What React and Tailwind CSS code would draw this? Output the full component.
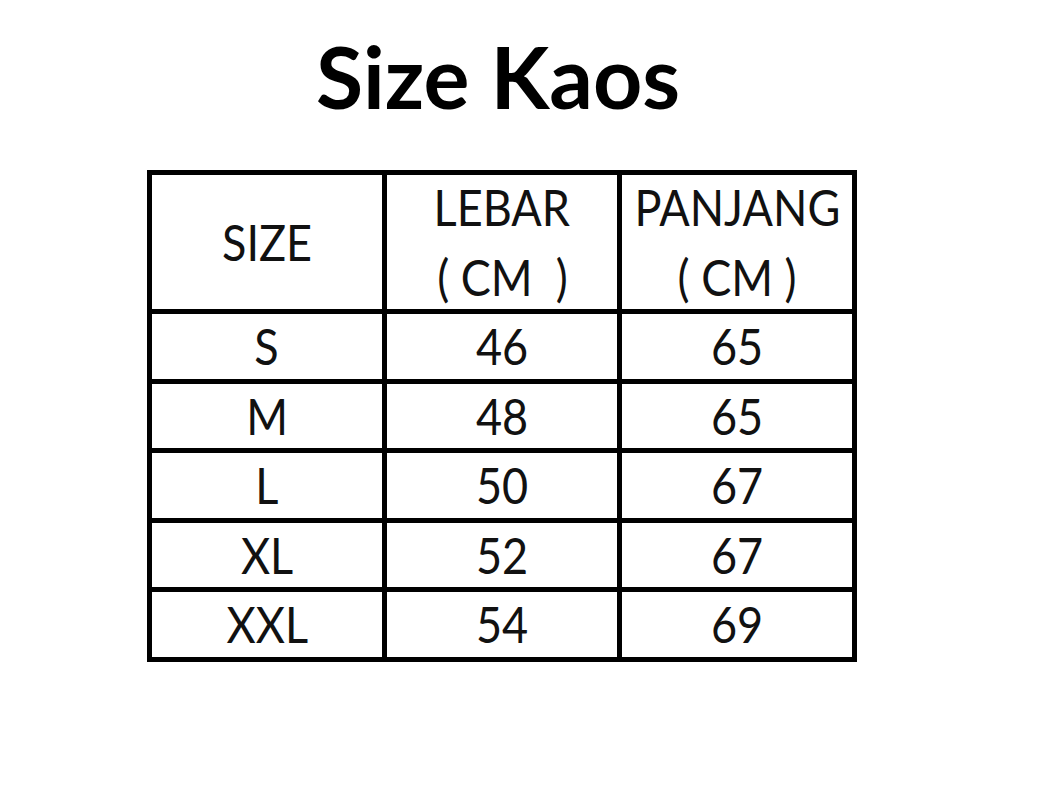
import React from "react";

const rows = [
  ["S", "46", "65"],
  ["M", "48", "65"],
  ["L", "50", "67"],
  ["XL", "52", "67"],
  ["XXL", "54", "69"],
];

function Cell({ children, h }) {
  return (
    <div className={`bg-white flex flex-col items-center justify-center ${h}`}>
      {children}
    </div>
  );
}

export default function App() {
  return (
    <div
      className="w-[1039px] h-[800px] bg-white text-[#111]"
      style={{ fontFamily: "Lato, 'Open Sans', sans-serif" }}
    >
      <div className="pt-[33px] pl-[316px]">
        <h1 className="text-[86px] leading-none font-bold tracking-normal text-black">
          Size Kaos
        </h1>
      </div>
      <div className="mt-[51px] ml-[147px] w-[710px] bg-black p-[5px] grid grid-cols-[230px_230px_230px] gap-[5px] text-[50px] leading-[70px]">
        <Cell h="h-[134px]">
          <span className="scale-x-[0.9] inline-block">SIZE</span>
        </Cell>
        <Cell h="h-[134px]">
          <span className="scale-x-[0.9] inline-block whitespace-pre">LEBAR</span>
          <span className="scale-x-[0.9] inline-block whitespace-pre">( CM  )</span>
        </Cell>
        <Cell h="h-[134px]">
          <span className="scale-x-[0.9] inline-block whitespace-pre">PANJANG</span>
          <span className="scale-x-[0.9] inline-block whitespace-pre">( CM )</span>
        </Cell>
        {rows.map((r) =>
          r.map((c, i) => (
            <Cell key={r[0] + i} h="h-[64.5px]">
              <span className="scale-x-[0.9] inline-block leading-none">{c}</span>
            </Cell>
          ))
        )}
      </div>
    </div>
  );
}
